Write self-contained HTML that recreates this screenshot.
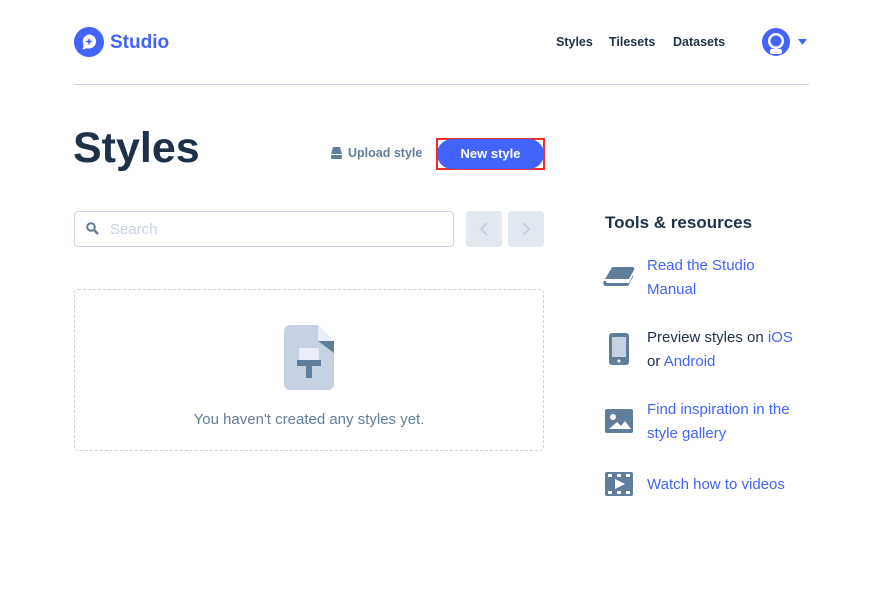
<!DOCTYPE html>
<html><head><meta charset="utf-8"><style>
*{box-sizing:border-box;margin:0;padding:0}
body{width:884px;height:613px;background:#fff;font-family:"Liberation Sans",sans-serif;color:#1f3148;position:relative;overflow:hidden}
.a{position:absolute}
.blue{color:#4264fb}
.nav{font-size:12.5px;font-weight:bold;color:#1f3148;top:35px}
.link{font-size:15px;line-height:24px;color:#4264fb}
</style></head><body>
<svg class="a" style="left:74px;top:27px" width="30" height="30" viewBox="0 0 30 30"><circle cx="15" cy="15" r="15" fill="#4264fb"/><path d="M15 7.5a7 7 0 1 1-2 13.7L8.5 22.5l1.2-4.5A7 7 0 0 1 15 7.5z" fill="#fff"/><path d="M15 10.5l1 3 3 1-3 1-1 3-1-3-3-1 3-1z" fill="#4264fb"/></svg>
<div class="a blue" style="left:110px;top:32px;font-size:19px;font-weight:bold">Studio</div>
<div class="a nav" style="left:556px">Styles</div>
<div class="a nav" style="left:609px">Tilesets</div>
<div class="a nav" style="left:673px">Datasets</div>
<svg class="a" style="left:762px;top:28px" width="28" height="28" viewBox="0 0 28 28"><circle cx="14" cy="14" r="14" fill="#4264fb"/><circle cx="14" cy="13" r="8" fill="#fff"/><circle cx="14" cy="13" r="5.5" fill="#4264fb"/><rect x="8" y="21" width="12" height="5" rx="2" fill="#fff"/></svg>
<svg class="a" style="left:798px;top:39px" width="9" height="6"><path d="M0 0h9L4.5 6z" fill="#4264fb"/></svg>
<div class="a" style="left:74px;top:84px;width:735px;height:1px;background:#c6d2e1"></div>
<div class="a" style="left:73px;top:124px;font-size:43px;font-weight:bold;color:#1f3148">Styles</div>
<svg class="a" style="left:331px;top:147px" width="11" height="12"><path d="M2 0h7l2 7H0z" fill="#607d9c"/><rect x="0" y="8" width="11" height="4" rx="1" fill="#607d9c"/></svg>
<div class="a" style="left:348px;top:146px;font-size:12.5px;font-weight:bold;color:#607d9c">Upload style</div>
<div class="a" style="left:436px;top:138px;width:109px;height:32px;border:2px solid #f02b2b"></div>
<div class="a" style="left:437px;top:139px;width:107px;height:30px;border-radius:15px;background:#4264fb;color:#fff;font-size:13px;font-weight:bold;text-align:center;line-height:30px">New style</div>
<div class="a" style="left:74px;top:211px;width:380px;height:36px;border:1px solid #c6d2e1;border-radius:4px"></div>
<svg class="a" style="left:86px;top:222px" width="13" height="13"><circle cx="5" cy="5" r="3.8" stroke="#607d9c" stroke-width="2" fill="none"/><path d="M8 8l4 4" stroke="#607d9c" stroke-width="2.4"/></svg>
<div class="a" style="left:110px;top:221px;font-size:15px;color:#c6d2e1">Search</div>
<div class="a" style="left:466px;top:211px;width:36px;height:36px;border-radius:4px;background:#e2e8f0"></div>
<div class="a" style="left:508px;top:211px;width:36px;height:36px;border-radius:4px;background:#e2e8f0"></div>
<svg class="a" style="left:466px;top:211px" width="78" height="36"><path d="M21 12l-6 6 6 6M57 12l6 6-6 6" stroke="#c6d2e1" stroke-width="2" fill="none"/></svg>
<div class="a" style="left:74px;top:289px;width:470px;height:162px;border:1px dashed #c6d2e1;border-radius:4px"></div>
<svg class="a" style="left:284px;top:325px" width="50" height="65" viewBox="0 0 50 65"><path d="M6 0h28l16 16v43a6 6 0 0 1-6 6H6a6 6 0 0 1-6-6V6a6 6 0 0 1 6-6z" fill="#c6d2e1"/><path d="M34 0l16 16H34z" fill="#eaeefb"/><path d="M34 16h16v12z" fill="#607d9c"/><rect x="15" y="23" width="20" height="12" rx="2" fill="#eaeefb"/><rect x="13" y="35" width="24" height="6" fill="#607d9c"/><rect x="22" y="40" width="6" height="13" fill="#607d9c"/></svg>
<div class="a" style="left:74px;top:411px;width:470px;text-align:center;font-size:15px;color:#607d9c">You haven't created any styles yet.</div>
<div class="a" style="left:605px;top:213px;font-size:17px;font-weight:bold;color:#1f3148">Tools &amp; resources</div>
<svg class="a" style="left:603px;top:266px" width="32" height="22" viewBox="0 0 32 22"><path d="M10 1h20a2 2 0 0 1 1 3l-5 9H2l6-10a3 3 0 0 1 2-2z" fill="#607d9c"/><path d="M1 15a3 3 0 0 0 2 5h22l5-9v-2l-4 8H4a2 2 0 0 1-1-2z" fill="#607d9c"/></svg>
<div class="a link" style="left:647px;top:254px">Read the Studio<br>Manual</div>
<svg class="a" style="left:609px;top:333px" width="20" height="32"><rect x="0" y="0" width="20" height="32" rx="3" fill="#607d9c"/><rect x="3" y="4" width="14" height="20" fill="#c6d2e1"/><circle cx="10" cy="28" r="1.5" fill="#fff"/></svg>
<div class="a link" style="left:647px;top:326px"><span style="color:#1f3148">Preview styles on </span>iOS<br><span style="color:#1f3148">or </span>Android</div>
<svg class="a" style="left:605px;top:409px" width="28" height="24"><rect width="28" height="24" rx="2" fill="#607d9c"/><circle cx="8" cy="8" r="3" fill="#fff"/><path d="M4 20l8-7 4 4 4-5 6 8z" fill="#fff"/></svg>
<div class="a link" style="left:647px;top:398px">Find inspiration in the<br>style gallery</div>
<svg class="a" style="left:605px;top:472px" width="28" height="24"><rect width="28" height="24" rx="2" fill="#607d9c"/><g fill="#fff"><rect x="3" y="2" width="4" height="3"/><rect x="12" y="2" width="4" height="3"/><rect x="21" y="2" width="4" height="3"/><rect x="3" y="19" width="4" height="3"/><rect x="12" y="19" width="4" height="3"/><rect x="21" y="19" width="4" height="3"/><path d="M10 7l10 5-10 5z"/></g></svg>
<div class="a link" style="left:647px;top:473px">Watch how to videos</div>
</body></html>
